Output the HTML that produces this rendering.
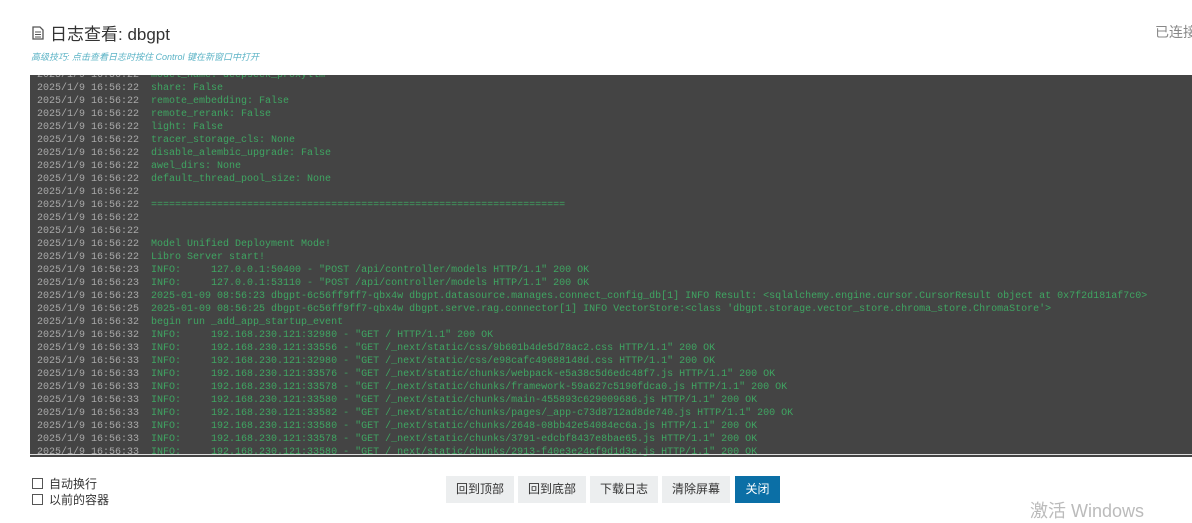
<!DOCTYPE html>
<html><head><meta charset="utf-8"><style>
body{margin:0;width:1192px;height:510px;background:#fff;overflow:hidden;position:relative;font-family:"Liberation Sans","Noto Sans CJK SC",sans-serif}
.title{position:absolute;left:32px;top:20px;font-size:17px;color:#333;display:flex;align-items:center}
.title svg{margin-right:6px}
.status{position:absolute;left:1155px;top:22px;font-size:14px;color:#888;white-space:nowrap}
.tip{position:absolute;left:31px;top:50px;font-size:9px;color:#5bb3c6;font-style:italic}
.log{position:absolute;left:30px;top:75px;width:1162px;height:382px;background:#444;overflow:hidden}
pre{margin:0;position:absolute;left:7px;top:-6px;font-family:"Liberation Mono",monospace;font-size:10px;line-height:13px;color:#3fa562;white-space:pre}
pre .t{color:#a9a9a9}
.uline{position:absolute;left:0;right:0;top:379px;height:1px;background:#ddd}
.cb{position:absolute;left:32px;font-size:12px;color:#333;display:flex;align-items:center}
.cb i{display:inline-block;width:9px;height:9px;border:1px solid #555;margin-right:6px;background:#fff}
.btn{position:absolute;top:476px;height:27px;line-height:27px;background:#eceeef;color:#333;font-size:12px;text-align:center}
.btn.p{background:#0b6fa6;color:#fff}
.wm{position:absolute;left:1030px;top:497px;font-size:18px;color:#bbb;white-space:nowrap}
</style></head><body>
<div class="title"><svg width="12" height="14" viewBox="0 0 12 14"><path d="M1 1h7l3 3v9H1z" fill="#fff" stroke="#555" stroke-width="1.3"/><path d="M3 6h6M3 8.5h6M3 11h6" stroke="#555" stroke-width="1"/></svg>日志查看: dbgpt</div>
<div class="status">已连接</div>
<div class="tip">高级技巧: 点击查看日志时按住 Control 键在新窗口中打开</div>
<div class="log"><pre><span class="t">2025/1/9 16:56:22</span>  model_name: deepseek_proxyllm
<span class="t">2025/1/9 16:56:22</span>  share: False
<span class="t">2025/1/9 16:56:22</span>  remote_embedding: False
<span class="t">2025/1/9 16:56:22</span>  remote_rerank: False
<span class="t">2025/1/9 16:56:22</span>  light: False
<span class="t">2025/1/9 16:56:22</span>  tracer_storage_cls: None
<span class="t">2025/1/9 16:56:22</span>  disable_alembic_upgrade: False
<span class="t">2025/1/9 16:56:22</span>  awel_dirs: None
<span class="t">2025/1/9 16:56:22</span>  default_thread_pool_size: None
<span class="t">2025/1/9 16:56:22</span>
<span class="t">2025/1/9 16:56:22</span>  =====================================================================
<span class="t">2025/1/9 16:56:22</span>
<span class="t">2025/1/9 16:56:22</span>
<span class="t">2025/1/9 16:56:22</span>  Model Unified Deployment Mode!
<span class="t">2025/1/9 16:56:22</span>  Libro Server start!
<span class="t">2025/1/9 16:56:23</span>  INFO:     127.0.0.1:50400 - "POST /api/controller/models HTTP/1.1" 200 OK
<span class="t">2025/1/9 16:56:23</span>  INFO:     127.0.0.1:53110 - "POST /api/controller/models HTTP/1.1" 200 OK
<span class="t">2025/1/9 16:56:23</span>  2025-01-09 08:56:23 dbgpt-6c56ff9ff7-qbx4w dbgpt.datasource.manages.connect_config_db[1] INFO Result: &lt;sqlalchemy.engine.cursor.CursorResult object at 0x7f2d181af7c0&gt;
<span class="t">2025/1/9 16:56:25</span>  2025-01-09 08:56:25 dbgpt-6c56ff9ff7-qbx4w dbgpt.serve.rag.connector[1] INFO VectorStore:&lt;class 'dbgpt.storage.vector_store.chroma_store.ChromaStore'&gt;
<span class="t">2025/1/9 16:56:32</span>  begin run _add_app_startup_event
<span class="t">2025/1/9 16:56:32</span>  INFO:     192.168.230.121:32980 - "GET / HTTP/1.1" 200 OK
<span class="t">2025/1/9 16:56:33</span>  INFO:     192.168.230.121:33556 - "GET /_next/static/css/9b601b4de5d78ac2.css HTTP/1.1" 200 OK
<span class="t">2025/1/9 16:56:33</span>  INFO:     192.168.230.121:32980 - "GET /_next/static/css/e98cafc49688148d.css HTTP/1.1" 200 OK
<span class="t">2025/1/9 16:56:33</span>  INFO:     192.168.230.121:33576 - "GET /_next/static/chunks/webpack-e5a38c5d6edc48f7.js HTTP/1.1" 200 OK
<span class="t">2025/1/9 16:56:33</span>  INFO:     192.168.230.121:33578 - "GET /_next/static/chunks/framework-59a627c5190fdca0.js HTTP/1.1" 200 OK
<span class="t">2025/1/9 16:56:33</span>  INFO:     192.168.230.121:33580 - "GET /_next/static/chunks/main-455893c629009686.js HTTP/1.1" 200 OK
<span class="t">2025/1/9 16:56:33</span>  INFO:     192.168.230.121:33582 - "GET /_next/static/chunks/pages/_app-c73d8712ad8de740.js HTTP/1.1" 200 OK
<span class="t">2025/1/9 16:56:33</span>  INFO:     192.168.230.121:33580 - "GET /_next/static/chunks/2648-08bb42e54084ec6a.js HTTP/1.1" 200 OK
<span class="t">2025/1/9 16:56:33</span>  INFO:     192.168.230.121:33578 - "GET /_next/static/chunks/3791-edcbf8437e8bae65.js HTTP/1.1" 200 OK
<span class="t">2025/1/9 16:56:33</span>  INFO:     192.168.230.121:33580 - "GET /_next/static/chunks/2913-f40e3e24cf9d1d3e.js HTTP/1.1" 200 OK</pre><div class="uline"></div></div>
<div class="cb" style="top:475px"><i></i>自动换行</div>
<div class="cb" style="top:491px"><i></i>以前的容器</div>
<div class="btn" style="left:446px;width:68px">回到顶部</div>
<div class="btn" style="left:518px;width:68px">回到底部</div>
<div class="btn" style="left:590px;width:68px">下载日志</div>
<div class="btn" style="left:662px;width:68px">清除屏幕</div>
<div class="btn p" style="left:735px;width:45px">关闭</div>
<div class="wm">激活 Windows</div>
</body></html>
